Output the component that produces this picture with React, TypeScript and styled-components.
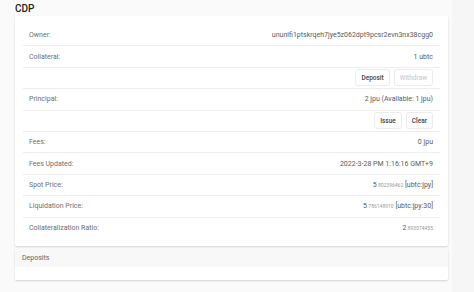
import React from "react";
import styled, { createGlobalStyle } from "styled-components";

const GlobalStyle = createGlobalStyle`
    html, body {
        margin: 0;
        padding: 0;
        background: #f4f4f4;
        font-family: Roboto, "Noto Sans", sans-serif;
        color: #333;
    }
`;

interface Row {
    label: string;
    value: React.ReactNode;
}

interface Action {
    label: string;
    disabled?: boolean;
}

function Amount({ int, frac, unit }: { int: string; frac: string; unit?: string }) {
    return (
        <>
            {int}
            <Fraction>.{frac}</Fraction>
            {unit && <> {unit}</>}
        </>
    );
}

function App() {
    const rows: (Row | Action[])[] = [
        { label: "Owner:", value: "ununifi1ptskrqeh7jye5z062dpt9pcsr2evn3nx38cgg0" },
        { label: "Collateral:", value: "1 ubtc" },
        [{ label: "Deposit" }, { label: "Withdraw", disabled: true }],
        { label: "Principal:", value: "2 jpu (Available: 1 jpu)" },
        [{ label: "Issue" }, { label: "Clear" }],
        { label: "Fees:", value: "0 jpu" },
        { label: "Fees Updated:", value: "2022-3-28 PM 1:16:16 GMT+9" },
        { label: "Spot Price:", value: <Amount int="5" frac="802396462" unit="[ubtc:jpy]" /> },
        { label: "Liquidation Price:", value: <Amount int="5" frac="786148910" unit="[ubtc:jpy:30]" /> },
        { label: "Collateralization Ratio:", value: <Amount int="2" frac="893074455" /> },
    ];

    return (
        <Page>
            <GlobalStyle />
            <Main>
                <Title>CDP</Title>
                <Card>
                    <List>
                        {rows.map((row, i) =>
                            Array.isArray(row) ? (
                                <ListRow key={i}>
                                    <Actions>
                                        {row.map((a) => (
                                            <Button key={a.label} disabled={a.disabled}>
                                                {a.label}
                                            </Button>
                                        ))}
                                    </Actions>
                                </ListRow>
                            ) : (
                                <ListRow key={i}>
                                    <Label>{row.label}</Label>
                                    <Value>{row.value}</Value>
                                </ListRow>
                            )
                        )}
                    </List>
                </Card>
                <Panel>
                    <PanelHeader>Deposits</PanelHeader>
                    <PanelBody />
                </Panel>
            </Main>
        </Page>
    );
}

const Page = styled.div`
    width: 474px;
    height: 292px;
    display: flex;
    background: #f6f6f6;
`;

const Main = styled.div`
    width: 452px;
    height: 100%;
    box-sizing: border-box;
    padding: 0 4px 0 15px;
    background: #fafafa;
`;

const Title = styled.h3`
    margin: 0;
    height: 16px;
    line-height: 18px;
    font-size: 10px;
    font-weight: 500;
    color: #222;
`;

const Card = styled.div`
    width: 433px;
    box-sizing: border-box;
    padding: 9px 8px 7px;
    background: #fff;
    border-radius: 2px;
    box-shadow: 0 1px 2px rgba(0, 0, 0, 0.12), 0 1px 3px rgba(0, 0, 0, 0.05);
`;

const List = styled.div`
    display: flex;
    flex-direction: column;
`;

const ListRow = styled.div`
    height: 21.4px;
    box-sizing: border-box;
    padding: 0 7px 0 6px;
    display: flex;
    align-items: center;
    justify-content: space-between;
    border-bottom: 1px solid #eeeeee;
    font-size: 7px;

    &:last-child {
        border-bottom: none;
    }
`;

const Label = styled.span`
    color: #6e6e6e;
`;

const Value = styled.span`
    color: #5a5a5a;
`;

const Fraction = styled.span`
    font-size: 5px;
    color: #999;
`;

const Actions = styled.div`
    margin-left: auto;
    display: flex;
    gap: 4px;
`;

const Button = styled.button`
    height: 17px;
    padding: 0 5px;
    border: 1px solid #ececec;
    border-radius: 3px;
    background: #fff;
    font-family: Roboto, sans-serif;
    font-size: 6.5px;
    font-weight: 500;
    color: #444;

    &:disabled {
        color: #cfcfcf;
    }
`;

const Panel = styled.div`
    width: 433px;
    margin-top: 2px;
    border-radius: 2px;
    overflow: hidden;
    background: #fff;
    box-shadow: 0 1px 2px rgba(0, 0, 0, 0.12), 0 1px 3px rgba(0, 0, 0, 0.05);
`;

const PanelHeader = styled.div`
    height: 18px;
    padding: 1px 7px 0;
    display: flex;
    align-items: center;
    background: #f8f8f8;
    font-size: 7px;
    color: #666;
`;

const PanelBody = styled.div`
    height: 13px;
    background: #fff;
`;

export default App;
